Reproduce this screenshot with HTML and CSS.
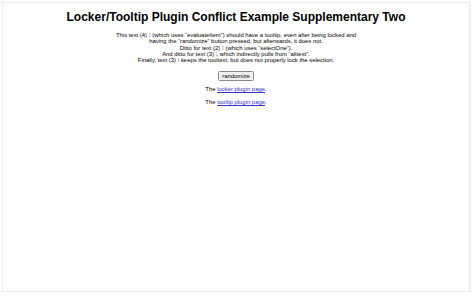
FILE: index.html
```html
<!DOCTYPE html>
<html>
<head>
<meta charset="utf-8">
<link rel="stylesheet" href="styles.css">
</head>
<body>
<div class="frame">
  <h1 class="title">Locker/Tooltip Plugin Conflict Example Supplementary Two</h1>
  <p class="desc">This text (4) &#8285; (which uses &ldquo;evaluateItem&rdquo;) should have a tooltip, even after being locked and<br>
  having the &ldquo;randomize&rdquo; button pressed, but afterwards, it does not.<br>
  Ditto for text (2) &#8285; (which uses &ldquo;selectOne&rdquo;).<br>
  And ditto for text (3) &#8282;, which indirectly pulls from &ldquo;alttext&rdquo;.<br>
  Finally, text (3) &#8286; keeps the tooltext, but does not properly lock the selection.</p>
  <div class="actions"><button class="btn" type="button">randomize</button></div>
  <p class="linkline">The <a href="#">locker plugin page</a>.</p>
  <p class="linkline">The <a href="#">tooltip plugin page</a>.</p>
</div>
</body>
</html>
```

FILE: styles.css
```css
html, body {
  margin: 0;
  padding: 0;
  background: #ffffff;
}
body {
  font-family: "Liberation Sans", Arial, sans-serif;
  color: #000;
}
.frame {
  box-sizing: border-box;
  margin: 2px 4px 0 2px;
  height: 290px;
  border: 1px solid #ececec;
  box-shadow: 1px 1px 2px rgba(0,0,0,0.05);
  text-align: center;
  padding-top: 7px;
}
.title {
  margin: 0;
  font-size: 12px;
  line-height: 14px;
  font-weight: bold;
}
.desc {
  margin: 8px 0 0;
  font-size: 5.9px;
  line-height: 6.3px;
}
.actions {
  margin-top: 8px;
  line-height: 0;
}
.btn {
  font-family: "Liberation Sans", Arial, sans-serif;
  font-size: 5.9px;
  line-height: 6px;
  padding: 1px 3px;
  border: 1px solid #8a8a8a;
  border-radius: 1.5px;
  background: #efefef;
  color: #000;
}
.linkline {
  margin: 5px 0 0;
  font-size: 5.9px;
  line-height: 7px;
}
.linkline + .linkline {
  margin-top: 6px;
}
.linkline a {
  color: #3333cc;
}
```
